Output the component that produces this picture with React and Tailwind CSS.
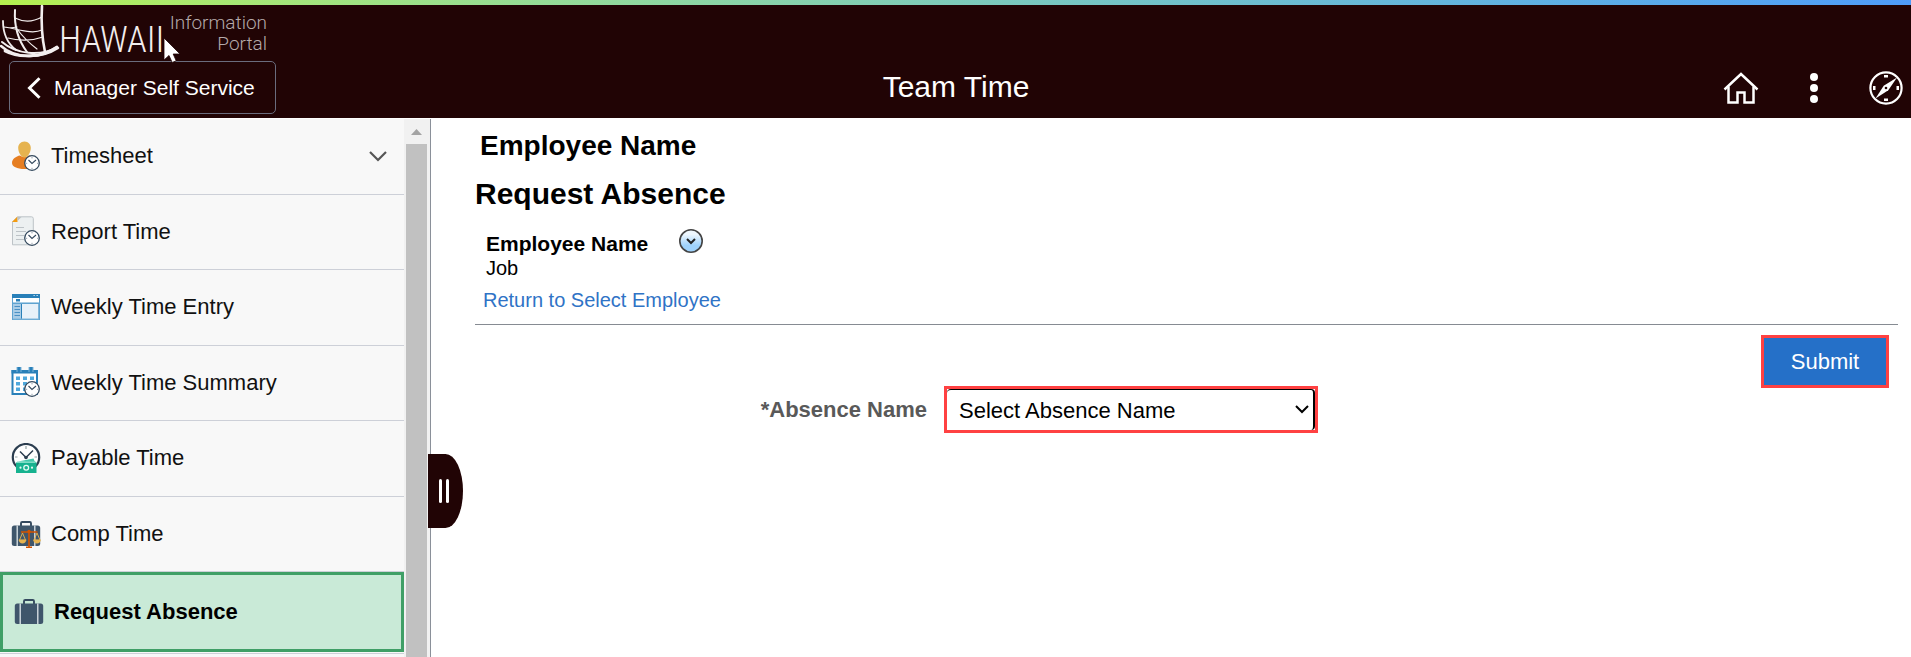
import React, { useState } from "react";

const ClockBadge = () => (
  <g>
    <circle cx="21" cy="22" r="7.3" fill="#fff" stroke="#34495e" strokeWidth="1.3" />
    <path d="M17.5 19l3.5 3.4 4-3.4" fill="none" stroke="#34495e" strokeWidth="1.1" />
    <path d="M21 16v1.4M21 26.8v1.4M15 22.3h1.2M26 22.3h1.2" stroke="#8896a5" strokeWidth="0.9" />
  </g>
);

const TimesheetIcon = () => (
  <svg viewBox="0 0 30 30" className="h-[30px] w-[30px]">
    <path d="M1 22c0-4 4-6.800 8-7.500q4.500 3 9 0c4 0.700 8 3.500 8 7.500 0 3.500-5 6-12.500 6S1 25.500 1 22z" fill="#e67e22" />
    <path d="M13.500 0.500c4 0 6.300 3 6.300 6.600 0 4.200-2.800 9.400-6.300 9.400s-6.300-5.200-6.300-9.400c0-3.600 2.300-6.600 6.300-6.600z" fill="#e6b34f" />
    <ClockBadge />
  </svg>
);

const ReportIcon = () => (
  <svg viewBox="0 0 30 30" className="h-[30px] w-[30px]">
    <path d="M6.500 0.800H20.500a1.800 1.800 0 0 1 1.800 1.800V28.800H1.500V5.800z" fill="#ecf0f1" stroke="#bdc3c7" />
    <path d="M6.500 0.500V6H1z" fill="#f39c12" />
    <path d="M6.500 1h4L6.500 5z" fill="#bdc3c7" />
    <path d="M5 11.500h8M5 15.500h10M5 19.500h8M5 23.500h8" stroke="#bdc3c7" strokeWidth="1.200" />
    <ClockBadge />
  </svg>
);

const EntryIcon = () => (
  <svg viewBox="0 0 30 30" className="h-[30px] w-[30px]">
    <rect x="1.500" y="2.500" width="27" height="25" fill="#e8f1f9" stroke="#5fa3d0" />
    <rect x="1" y="2" width="28" height="4" fill="#2980b9" />
    <path d="M22.500 3.500h1.300M25.500 3.500h1.300" stroke="#cfe5f4" strokeWidth="1.200" />
    <rect x="2" y="6" width="26" height="4.500" fill="#fff" />
    <rect x="5" y="7" width="4" height="2.500" fill="#2980b9" />
    <rect x="2" y="10.500" width="26" height="1.500" fill="#5fa3d0" />
    <rect x="2" y="12" width="8" height="15" fill="#a9cce6" />
    <path d="M3.500 14.500h5.500M3.500 17.500h5.500M3.500 20.500h5.500M3.500 23.500h5.500" stroke="#4a90c4" strokeWidth="1.200" />
    <path d="M10.500 12v15" stroke="#2980b9" />
    <path d="M27.500 12v15M2 27h26" stroke="#7fb5da" />
  </svg>
);

const SummaryIcon = () => (
  <svg viewBox="0 0 30 30" className="h-[30px] w-[30px]">
    <path d="M1.500 4V27H26V4z" fill="#fff" stroke="#2980b9" strokeWidth="2" />
    <rect x="0.500" y="3" width="26.500" height="3.500" fill="#2980b9" />
    <path d="M8 0v5M20 0v5" stroke="#7fb5da" strokeWidth="5" />
    <path d="M8 0v5M20 0v5" stroke="#2980b9" strokeWidth="3" />
    <g fill="#4fa8dc">
      <path d="M5 9.500h4v3.500H5zM12 9.500h4v3.500h-4zM19 9.500h4v3.500h-4z" />
      <path d="M5 15h4v3.500H5zM12 15h4v3.500h-4z" />
      <path d="M5 20.500h4V24H5zM12 20.500h4V24h-4z" />
    </g>
    <ClockBadge />
  </svg>
);

const PayableIcon = () => (
  <svg viewBox="0 0 30 30" className="h-[30px] w-[30px]">
    <circle cx="15" cy="14.200" r="13.200" fill="#fff" stroke="#2c3e50" strokeWidth="2.200" />
    <path d="M9 8.500l6 6 7-7" fill="none" stroke="#2c3e50" strokeWidth="1.500" />
    <circle cx="15" cy="14.500" r="1.800" fill="#2c3e50" />
    <path d="M15 3v3M4 14h2.500M23.500 14H26" stroke="#95a5a6" strokeWidth="1.200" />
    <path d="M7 18.500L22.500 15.500l1 2.500 2 1.500z" fill="#45c9ac" />
    <rect x="5" y="19.500" width="20.500" height="10.500" fill="#16b28f" />
    <path d="M6 18.500h18v1.500H6z" fill="#7fdcc5" />
    <circle cx="15.200" cy="24.700" r="2.400" fill="none" stroke="#e6faf4" strokeWidth="1.300" />
    <circle cx="9.500" cy="24.700" r="1.100" fill="#e6faf4" />
    <circle cx="21" cy="24.700" r="1.100" fill="#e6faf4" />
  </svg>
);

const Suitcase = () => (
  <g>
    <path d="M10 8V5.200a1.200 1.200 0 0 1 1.200-1.200h7.600a1.200 1.200 0 0 1 1.200 1.200V8" fill="none" stroke="#34495e" strokeWidth="1.900" />
    <rect x="0.800" y="7.500" width="28.400" height="20.500" rx="2.500" fill="#3f566b" />
    <path d="M6.200 7.500V28M23.800 7.500V28" stroke="#dfe6ea" strokeWidth="1.300" />
  </g>
);

const AbsenceIcon = () => (
  <svg viewBox="0 0 30 30" className="h-[30px] w-[30px]">
    <Suitcase />
  </svg>
);

const CompIcon = () => (
  <svg viewBox="0 0 30 30" className="h-[30px] w-[30px]">
    <Suitcase />
    <path d="M18 12.500V29M15 29.200h6M10 14h16.500" stroke="#d35400" strokeWidth="1.600" />
    <circle cx="18" cy="13.500" r="1.700" fill="#d35400" />
    <path d="M11.500 15l-3 7h6zM26 15l-3 7h6z" fill="none" stroke="#e6b34f" strokeWidth="0.900" />
    <path d="M7.500 21.800h8q-0.800 3.700-4 3.700t-4-3.700zM22 21.800h8q-0.800 3.700-4 3.700t-4-3.700z" fill="#e6b34f" />
  </svg>
);

const menuItems = [
  { label: "Timesheet", icon: TimesheetIcon, expandable: true },
  { label: "Report Time", icon: ReportIcon },
  { label: "Weekly Time Entry", icon: EntryIcon },
  { label: "Weekly Time Summary", icon: SummaryIcon },
  { label: "Payable Time", icon: PayableIcon },
  { label: "Comp Time", icon: CompIcon },
];

const Logo = () => (
  <svg viewBox="0 0 270 52" className="block h-[52px] w-[270px] overflow-visible" role="img" aria-label="Hawaii Information Portal">
    <g fill="none" stroke="#f3eeee" strokeLinecap="round">
      <path d="M42 1c-1 16 0 32 3 46" strokeWidth="2.600" />
      <path d="M15 5c-1 16 3 30 12 42" strokeWidth="2" />
      <path d="M3 16c0 12 4 22 13 29" strokeWidth="1.800" />
      <path d="M15 13c8 4 18 4 27-1" strokeWidth="1.200" />
      <path d="M4 22c12 1 27 8 38 3M4 22c4 1 9 1 13 0M8 33c10 3 24 3 35-1M17 24c6 8 12 14 20 20" strokeWidth="1.200" />
      <path d="M2 37c14 12 38 15 55 5" strokeWidth="2" />
      <path d="M1 41c14 13 40 13 57 2" strokeWidth="2.400" />
      <path d="M5 46c13 7 37 7 52-4" strokeWidth="2.800" />
    </g>
    <text x="59" y="47" fill="#f3eeee" fontSize="36" fontWeight="300" fontFamily="'Roboto Condensed', 'Liberation Sans Narrow', Roboto, sans-serif">
      HAWAII
    </text>
    <g fill="#b5aaaa" fontFamily="Roboto, sans-serif" fontWeight="300" fontSize="19" textAnchor="end">
      <text x="267" y="24">Information</text>
      <text x="267" y="45">Portal</text>
    </g>
  </svg>
);

const Header = () => (
  <header className="relative border-b border-white bg-[#210405] text-white">
    <div className="h-[5px] bg-linear-to-r from-[#b5f04e] to-[#4f9dfa]" />
    <Logo />
    <div className="flex items-center justify-between pt-1 pb-1">
      <div className="flex-1 pl-[9px]">
        <button className="flex h-[53px] items-center gap-[13px] rounded-[5px] border border-[#6a6c7d] pr-5 pl-[17px] text-[21px]">
          <svg viewBox="0 0 14 22" className="h-[22px] w-[14px]" fill="none" stroke="#fff" strokeWidth="3">
            <path d="M12.500 1.200L2.500 11l10 9.800" />
          </svg>
          Manager Self Service
        </button>
      </div>
      <h1 className="pb-0.5 text-[30px] leading-9">Team Time</h1>
      <nav className="flex flex-1 items-center justify-end pr-2">
        <button aria-label="Home">
          <svg viewBox="0 0 36 34" className="h-[34px] w-[36px]" fill="none" stroke="#fff" strokeWidth="2.500">
            <path d="M1.500 18.500L18 3l16.500 15.500" />
            <path d="M5.500 15.500V31.500H14.500V21.500H21.500V31.500H30.500V15.500" />
          </svg>
        </button>
        <button aria-label="Actions" className="mx-[50px]">
          <svg viewBox="0 0 10 34" className="h-[34px] w-[10px]" fill="#fff">
            <circle cx="5" cy="6" r="4" />
            <circle cx="5" cy="17" r="4" />
            <circle cx="5" cy="28" r="4" />
          </svg>
        </button>
        <button aria-label="NavBar">
          <svg viewBox="0 0 34 34" className="h-[34px] w-[34px]" fill="#fff">
            <circle cx="17" cy="17" r="15.600" fill="none" stroke="#fff" strokeWidth="2.200" />
            <path d="M28 6.500L19.300 19.300 6.500 27.500 14.700 14.700z" />
            <circle cx="17" cy="17" r="1.300" fill="#210405" />
            <path d="M15 4h4v2.500h-4zM15 27.500h4V30h-4zM4 15h2.500v4H4zM27.500 15H30v4h-2.500z" />
          </svg>
        </button>
      </nav>
    </div>
    <svg viewBox="0 0 18 26" className="absolute top-[37px] left-[163px] h-[26px] w-[18px]">
      <path d="M1 1v22l5-4.500 3.200 7 4-1.700-3-6.800h6.800z" fill="#fff" stroke="#210405" strokeWidth="0.800" />
    </svg>
  </header>
);

const Sidebar = () => (
  <aside className="relative flex shrink-0 border-r border-[#8a9099]">
    <ul className="w-[404px] bg-[#f8f8f8] text-[22px] text-[#111]">
      {menuItems.map(({ label, icon: Icon, expandable }) => (
        <li key={label} className="border-b border-[#cdd0d8] odd:h-[76px] even:h-[75px]">
          <a href="#" className="flex h-full items-center gap-[10px] pr-[17px] pb-0.5 pl-[11px]">
            <Icon />
            <span className="flex-1">{label}</span>
            {expandable && (
              <svg viewBox="0 0 18 12" className="h-[12px] w-[18px]" fill="none" stroke="#555" strokeWidth="2.200">
                <path d="M1 2l8 8 8-8" />
              </svg>
            )}
          </a>
        </li>
      ))}
      <li className="border-b border-[#cdd0d8] pb-px">
        <a
          href="#"
          aria-current="page"
          className="flex h-20 items-center gap-[10px] border-[3px] border-[#3f9f66] bg-[#c9ead7] pb-0.5 pl-[11px] font-bold text-black"
        >
          <AbsenceIcon />
          <span>Request Absence</span>
        </a>
      </li>
    </ul>
    <div className="flex w-[26px] flex-col bg-[#f1f1f1] pr-[3px] pl-[2px]">
      <svg viewBox="0 0 21 25" className="h-[25px] w-[21px]">
        <path d="M5 16h11l-5.500-6z" fill="#a3a3a3" />
      </svg>
      <div className="flex-1 bg-[#c1c1c1]" />
    </div>
    <button
      aria-label="Collapse side panel"
      className="absolute top-[335px] left-[428px] flex h-[74px] w-[35px] items-center justify-center gap-1 rounded-r-[50%] bg-[#210405] pr-[3px]"
    >
      <span className="h-6 w-[3px] rounded-sm bg-white" />
      <span className="h-6 w-[3px] rounded-sm bg-white" />
    </button>
  </aside>
);

const RequestForm = () => {
  const [absence, setAbsence] = useState("");

  return (
    <main className="flex-1 pt-[11px] pr-[13px] pl-[44px]">
      <h2 className="pl-[5px] text-[28px] leading-8 font-bold">Employee Name</h2>
      <h2 className="mt-[14px] text-[30px] leading-9 font-bold">Request Absence</h2>
      <div className="mt-5 flex items-start gap-[30px] pl-[11px]">
        <div className="leading-6">
          <p className="text-[21px] font-bold">Employee Name</p>
          <p className="text-[20px]">Job</p>
        </div>
        <button aria-label="Related actions" className="-mt-1">
          <svg viewBox="0 0 26 26" className="h-[26px] w-[26px]">
            <defs>
              <linearGradient id="actionFill" x1="0" y1="0" x2="0" y2="1">
                <stop offset="0.200" stopColor="#eef7fe" />
                <stop offset="0.700" stopColor="#9fd2fb" />
              </linearGradient>
            </defs>
            <circle cx="13" cy="13" r="11.200" fill="url(#actionFill)" stroke="#444" strokeWidth="1.600" />
            <path d="M9 11l4 4 4-4" fill="none" stroke="#222" strokeWidth="2" />
          </svg>
        </button>
      </div>
      <a href="#" className="mt-2 block w-fit pl-2 text-[20px] leading-6 text-[#2f73c6]">
        Return to Select Employee
      </a>
      <hr className="mt-3 border-[#868b92]" />
      <div className="mt-[10px] flex justify-end pr-[9px]">
        <button className="h-[53px] w-32 border-[3px] border-[#ff4142] bg-[#2570c8] text-[22px] text-white">Submit</button>
      </div>
      <div className="-mt-0.5 flex items-center gap-[17px] text-[22px]">
        <label htmlFor="absenceName" className="w-[452px] text-right font-bold text-[#595959]">
          *Absence Name
        </label>
        <div className="relative border-[3px] border-[#ff4142]">
          <select
            id="absenceName"
            value={absence}
            onChange={(e) => setAbsence(e.target.value)}
            className="block h-[41px] w-[368px] appearance-none rounded-[4px] border-t border-r-2 border-black bg-white pl-3"
          >
            <option value="">Select Absence Name</option>
          </select>
          <svg viewBox="0 0 14 9" className="pointer-events-none absolute top-4 right-1.5 h-[9px] w-[14px]" fill="none" stroke="#000" strokeWidth="2">
            <path d="M1 1l6 6 6-6" />
          </svg>
        </div>
      </div>
    </main>
  );
};

export default function App() {
  return (
    <div className="flex min-h-screen flex-col bg-white font-['Liberation_Sans',Arial,sans-serif] text-black">
      <Header />
      <div className="flex flex-1">
        <Sidebar />
        <RequestForm />
      </div>
    </div>
  );
}
